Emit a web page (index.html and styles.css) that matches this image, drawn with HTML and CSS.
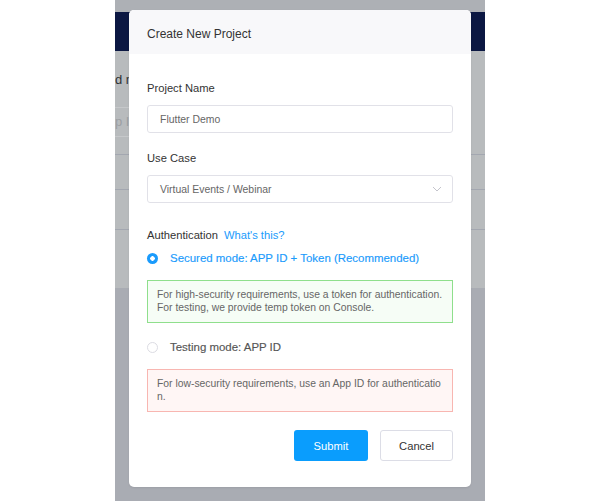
FILE: index.html
```html
<!DOCTYPE html>
<html lang="en">
<head>
<meta charset="utf-8">
<title>Create New Project</title>
<link rel="stylesheet" href="styles.css">
</head>
<body>
<div class="stage">
  <div class="app">
    <div class="app-top"></div>
    <div class="app-nav"></div>
    <div class="app-main">
      <div class="app-heading">d m</div>
      <div class="app-search">p I</div>
      <div class="app-row r1"></div>
      <div class="app-row r2"></div>
      <div class="app-row r3"></div>
    </div>
    <div class="app-foot"></div>
  </div>

  <div class="modal">
    <div class="modal-header">Create New Project</div>
    <div class="modal-body">
      <div class="field-label">Project Name</div>
      <div class="input">Flutter Demo</div>

      <div class="field-label gap-top">Use Case</div>
      <div class="input select">
        <span>Virtual Events / Webinar</span>
        <svg class="chevron" width="10" height="6" viewBox="0 0 10 6"><polyline points="1,1 5,5 9,1" fill="none" stroke="#c4c4cc" stroke-width="1"/></svg>
      </div>

      <div class="auth-row">
        <span class="auth-label">Authentication</span>
        <span class="link">What's this?</span>
      </div>

      <div class="radio-row checked">
        <span class="radio"></span>
        <span class="radio-text">Secured mode: APP ID + Token (Recommended)</span>
      </div>
      <div class="note note-ok">For high-security requirements, use a token for authentication. For testing, we provide temp token on Console.</div>

      <div class="radio-row unchecked">
        <span class="radio"></span>
        <span class="radio-text">Testing mode: APP ID</span>
      </div>
      <div class="note note-warn">For low-security requirements, use an App ID for authentication.</div>

      <div class="actions">
        <button class="btn btn-primary">Submit</button>
        <button class="btn btn-default">Cancel</button>
      </div>
    </div>
  </div>
</div>
</body>
</html>
```

FILE: styles.css
```css
* { box-sizing: border-box; }

html, body {
  margin: 0;
  padding: 0;
  background: #ffffff;
  font-family: "Liberation Sans", Arial, Helvetica, sans-serif;
}

.stage {
  position: relative;
  width: 370px;
  height: 501px;
  margin-left: 115px;
  overflow: hidden;
}

/* ---------- dimmed app behind the modal ---------- */
.app {
  display: flex;
  flex-direction: column;
  height: 100%;
}
.app-top { height: 12px; background: #adb0b5; }
.app-nav { height: 39px; background: #0b1742; }
.app-main {
  height: 237px;
  background: #b8bbbd;
  display: flex;
  flex-direction: column;
}
.app-heading {
  height: 56px;
  padding-top: 22px;
  font-size: 13px;
  line-height: 14px;
  color: #2f3134;
  white-space: nowrap;
}
.app-search {
  width: 340px;
  height: 30px;
  border-top: 1px solid #c6c8ca;
  border-bottom: 1px solid #c6c8ca;
  font-size: 13px;
  line-height: 28px;
  color: #9c9fa3;
  white-space: nowrap;
}
.app-row { border-bottom: 1px solid #a3a7b0; }
.app-row.r1 { height: 18px; }
.app-row.r2 { height: 35px; }
.app-row.r3 { height: 40px; }
.app-foot { flex: 1; background: #a9acb3; }

/* ---------- modal ---------- */
.modal {
  position: absolute;
  left: 14px;
  top: 10px;
  width: 342px;
  background: #ffffff;
  border-radius: 5px;
  overflow: hidden;
  box-shadow: 0 1px 2px rgba(0, 0, 0, 0.08);
}
.modal-header {
  height: 44px;
  padding: 4px 18px 0;
  display: flex;
  align-items: center;
  background: #f8f8fa;
  font-size: 12px;
  color: #333333;
}
.modal-body {
  padding: 27px 18px 26px;
  display: flex;
  flex-direction: column;
}

.field-label {
  font-size: 11.2px;
  line-height: 14px;
  color: #333333;
}
.field-label.gap-top { margin-top: 18px; }

.input {
  margin-top: 10px;
  height: 28px;
  border: 1px solid #e1e1e8;
  border-radius: 3px;
  padding: 0 12px;
  display: flex;
  align-items: center;
  font-size: 10.45px;
  color: #666666;
}
.select { justify-content: space-between; padding-right: 10px; }
.chevron { display: block; }

.auth-row {
  margin-top: 25px;
  display: flex;
  align-items: center;
  gap: 6px;
  font-size: 11.2px;
  line-height: 14px;
}
.auth-label { color: #333333; }
.link { color: #1a9bfc; }

.radio-row {
  display: flex;
  align-items: center;
  gap: 12px;
  font-size: 11.45px;
  line-height: 14px;
  -webkit-text-stroke: 0.15px currentColor;
}
.radio-row.checked { margin-top: 9px; color: #1a9bfc; }
.radio-row.unchecked { margin-top: 17px; color: #555555; }
.radio {
  width: 11px;
  height: 11px;
  border-radius: 50%;
  flex: none;
}
.checked .radio {
  background: radial-gradient(circle, #ffffff 0 2px, #1a9bfc 2.5px);
}
.unchecked .radio {
  border: 1px solid #dcdce3;
  background: #ffffff;
}

.note {
  margin-top: 15px;
  padding: 8px 8px 8px 9px;
  font-size: 10.36px;
  line-height: 12.6px;
  color: #666666;
}
.note-ok {
  border: 1px solid #8fdf8c;
  background: #f6fdf6;
}
.note-warn {
  border: 1px solid #f8b6b1;
  background: #fff6f5;
  word-break: break-all;
}

.actions {
  margin-top: 18px;
  display: flex;
  justify-content: flex-end;
  gap: 12px;
}
.btn {
  height: 31px;
  border-radius: 3px;
  font-family: inherit;
  font-size: 11.2px;
  padding: 0;
  cursor: pointer;
}
.btn-primary {
  width: 74px;
  border: none;
  background: #0a9dfd;
  color: #ffffff;
}
.btn-default {
  width: 73px;
  border: 1px solid #dcdde6;
  background: #ffffff;
  color: #333333;
}
```
